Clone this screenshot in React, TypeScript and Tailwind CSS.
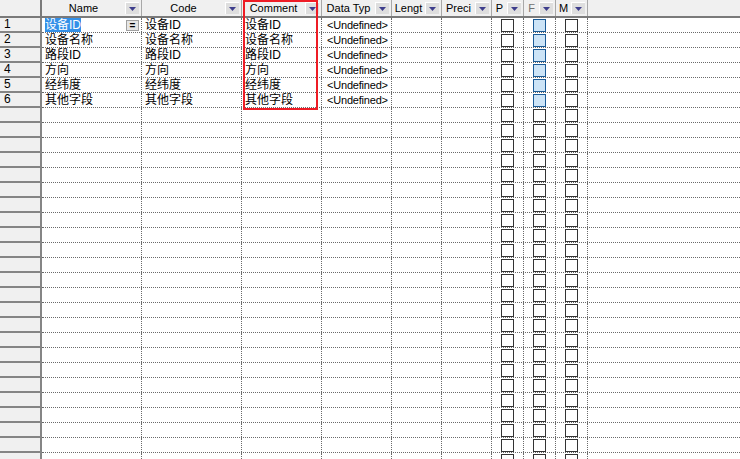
import React from 'react';

type Col = { key: string; label: string; w: string; pad: string; muted?: boolean; check?: boolean };

const cols: Col[] = [
  { key: 'name', label: 'Name', w: 'w-[100px]', pad: 'pl-[3px]' },
  { key: 'code', label: 'Code', w: 'w-[100px]', pad: 'pl-[3px]' },
  { key: 'comment', label: 'Comment', w: 'w-[80px]', pad: 'pl-[3px]' },
  { key: 'type', label: 'Data Typ', w: 'w-[70px]', pad: 'pl-[5px]' },
  { key: 'len', label: 'Lengt', w: 'w-[50px]', pad: 'pl-[3px]' },
  { key: 'prec', label: 'Preci', w: 'w-[50px]', pad: 'pl-[3px]' },
  { key: 'p', label: 'P', w: 'w-[32px]', pad: '', check: true },
  { key: 'f', label: 'F', w: 'w-[32px]', pad: '', check: true, muted: true },
  { key: 'm', label: 'M', w: 'w-[32px]', pad: '', check: true },
];

const fields = ['设备ID', '设备名称', '路段ID', '方向', '经纬度', '其他字段'];
const TOTAL_ROWS = 30;

const DropButton = () => (
  <div className="absolute right-[2px] top-[2px] w-[14px] h-[12px] bg-[#dedede] border-t border-l border-white flex items-center justify-center">
    <svg width="7" height="4" viewBox="0 0 7 4">
      <polygon points="0,0 7,0 3.5,4" fill="#3e3e8c" />
    </svg>
  </div>
);

const CheckBox = ({ blue }: { blue?: boolean }) => (
  <div
    className={`w-[13px] h-[13px] border ${blue ? 'bg-[#cce4f7] border-[#1a5a96]' : 'bg-white border-[#333333]'}`}
  />
);

export default function App() {
  return (
    <div
      className="relative w-[740px] h-[459px] overflow-hidden bg-white text-black select-none"
      style={{ fontFamily: '"Liberation Sans", "Noto Sans CJK SC", sans-serif' }}
    >
      {/* Header */}
      <div className="flex h-[18px] bg-[#f0f0f0] border-b-2 border-[#7a7a7a] text-[11px]">
        <div className="w-[42px] shrink-0 border-r-2 border-[#7a7a7a]" />
        {cols.map((c) => (
          <div
            key={c.key}
            className={`${c.w} shrink-0 relative border-r border-[#a8a8a8] flex items-center`}
          >
            <div className={`flex-1 pr-[16px] text-center leading-none ${c.muted ? 'text-[#707070]' : ''}`}>
              {c.label}
            </div>
            <DropButton />
          </div>
        ))}
        <div className="flex-1" />
      </div>

      {/* Rows */}
      {Array.from({ length: TOTAL_ROWS }).map((_, i) => {
        const field = fields[i];
        return (
          <div key={i} className="flex h-[15px]">
            <div className="w-[42px] shrink-0 bg-[#f0f0f0] border-r-2 border-b-2 border-[#858585] pl-[4px] text-[12px] leading-[13px]">
              {field ? i + 1 : ''}
            </div>
            <div className="flex flex-1 border-b border-dotted border-[#6a6a6a] text-[12px] leading-[14px]">
              {cols.map((c) => {
                let content: React.ReactNode = null;
                if (c.check) {
                  content = <CheckBox blue={c.key === 'f' && !!field} />;
                } else if (field) {
                  if (c.key === 'name' && i === 0) {
                    content = <span className="bg-[#3390e8] text-white">{field}</span>;
                  } else if (c.key === 'name' || c.key === 'code' || c.key === 'comment') {
                    content = field;
                  } else if (c.key === 'type') {
                    content = <span className="text-[11px] tracking-[-0.2px]">&lt;Undefined&gt;</span>;
                  }
                }
                return (
                  <div
                    key={c.key}
                    className={`${c.w} shrink-0 relative border-r border-dotted border-[#6a6a6a] whitespace-nowrap overflow-hidden ${
                      c.check ? 'flex justify-center pt-[1px]' : c.pad
                    }`}
                  >
                    {content}
                    {c.key === 'name' && i === 0 && (
                      <div className="absolute right-[2px] top-[2px] w-[13px] h-[11px] bg-[#e6e6e6] border border-[#a0a0a0] text-[10px] leading-[9px] text-center font-bold">
                        =
                      </div>
                    )}
                  </div>
                );
              })}
              <div className="flex-1" />
            </div>
          </div>
        );
      })}

      {/* Red annotation box */}
      <div className="absolute left-[243px] top-0 w-[75px] h-[110px] border-2 border-[#ee1c25] pointer-events-none" />
    </div>
  );
}
